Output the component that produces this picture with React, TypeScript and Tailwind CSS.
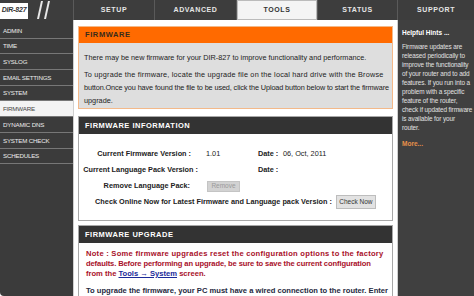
import React from "react";

const sideItems = [
  "ADMIN",
  "TIME",
  "SYSLOG",
  "EMAIL SETTINGS",
  "SYSTEM",
  "FIRMWARE",
  "DYNAMIC DNS",
  "SYSTEM CHECK",
  "SCHEDULES",
];

const tabs = [
  { label: "SETUP", w: "w-[80px]" },
  { label: "ADVANCED", w: "w-[81px]" },
  { label: "TOOLS", w: "w-[80px]", active: true },
  { label: "STATUS", w: "w-[79px]" },
  { label: "SUPPORT", w: "w-[76px]" },
];

const hints = [
  "Firmware updates are",
  "released periodically to",
  "improve the functionality",
  "of your router and to add",
  "features. If you run into a",
  "problem with a specific",
  "feature of the router,",
  "check if updated firmware",
  "is available for your",
  "router.",
];

export default function App() {
  return (
    <div className="w-[474px] h-[296px] overflow-hidden bg-white font-['Liberation_Sans',Arial,sans-serif] flex flex-col">
      {/* Top bar */}
      <div className="h-[20px] bg-[#3d3d3d] flex items-stretch shrink-0">
        <div className="w-[73px] flex items-center">
          <div className="mt-[1px] w-[28px] h-[16px] bg-white flex items-center justify-center">
            <span className="text-[7px] font-bold italic text-[#333] tracking-[-0.2px]">DIR-827</span>
          </div>
          <svg width="14" height="18" viewBox="0 0 14 18" className="ml-[9px]">
            <polygon points="4,0 6,0 2,18 0,18" fill="#e8e8e8" />
            <polygon points="11,0 13,0 9,18 7,18" fill="#e8e8e8" />
          </svg>
        </div>
        <div className="flex gap-[1px] bg-[#5a5a5a] pl-[1px]">
          {tabs.map((t) => (
            <div
              key={t.label}
              className={`${t.w} flex items-center justify-center ${
                t.active ? "bg-[#f4f4f4] border border-[#bbb]" : "bg-[#3d3d3d]"
              }`}
            >
              <span
                className={`text-[7px] font-bold tracking-[0.6px] ${
                  t.active ? "text-[#333]" : "text-[#e6e6e6]"
                }`}
              >
                {t.label}
              </span>
            </div>
          ))}
        </div>
      </div>

      <div className="flex flex-1 min-h-0">
        {/* Sidebar */}
        <div className="w-[73px] bg-[#3b3b3b] pt-[3px] shrink-0 rounded-bl-[4px]">
          {sideItems.map((s) => {
            const active = s === "FIRMWARE";
            return (
              <div
                key={s}
                className={`h-[15.7px] flex items-center pl-[3px] border-b border-[#777] ${
                  active ? "bg-[#f3f3f3]" : "bg-[#3b3b3b]"
                }`}
              >
                <span
                  className={`text-[6.2px] tracking-[-0.2px] ${
                    active ? "text-[#444]" : "text-[#ececec]"
                  }`}
                >
                  {s}
                </span>
              </div>
            );
          })}
        </div>

        {/* Main */}
        <div className="flex-1 bg-white px-[4px] pt-[6px] border-x border-[#d0d0d0] min-w-0">
          {/* FIRMWARE */}
          <div className="border border-[#f3b98a]">
            <div className="h-[16px] bg-[#ff6a00] flex items-center pl-[6px]">
              <span className="text-[7.5px] font-bold tracking-[0.6px] text-[#3a2a1a]">FIRMWARE</span>
            </div>
            <div className="h-[65px] bg-[#dedede] px-[5px] pt-[8px] text-[7.3px] leading-[13px] text-[#222] whitespace-nowrap">
              <p>There may be new firmware for your DIR-827 to improve functionality and performance.</p>
              <p className="mt-[4px]">
                <span className="tracking-[0.2px]">To upgrade the firmware, locate the upgrade file on the local hard drive with the Browse</span>
                <br />
                <span className="tracking-[-0.12px]">button.Once you have found the file to be used, click the Upload button below to start the firmware</span>
                <br />
                upgrade.
              </p>
            </div>
          </div>

          {/* FIRMWARE INFORMATION */}
          <div className="mt-[7px] border border-[#a8a8a8]">
            <div className="h-[17px] bg-[#333] flex items-center pl-[6px]">
              <span className="text-[7.5px] font-bold tracking-[0.5px] text-white">FIRMWARE INFORMATION</span>
            </div>
            <div className="h-[86px] bg-white pt-[12px] text-[7.3px] text-[#222] whitespace-nowrap">
              <div className="h-[16px] flex items-center">
                <div className="w-[121px] text-right pr-[9px] font-bold">Current Firmware Version :</div>
                <div className="ml-[6px] w-[52px]">1.01</div>
                <div className="w-[25px] font-bold">Date :</div>
                <div>06, Oct, 2011</div>
              </div>
              <div className="h-[16px] flex items-center">
                <div className="w-[121px] text-right pr-[2px] font-bold">Current Language Pack Version :</div>
                <div className="ml-[6px] w-[52px]"></div>
                <div className="w-[25px] font-bold">Date :</div>
              </div>
              <div className="h-[16px] flex items-center">
                <div className="w-[121px] text-right pr-[10px] font-bold">Remove Language Pack:</div>
                <div className="ml-[7px] w-[33px] h-[11px] bg-[#d2d2d2] border border-[#c4c4c4] flex items-center justify-center text-[6.5px] text-[#9a9a9a]">
                  Remove
                </div>
              </div>
              <div className="h-[16px] flex items-center justify-center gap-[4px]">
                <span className="font-bold">Check Online Now for Latest Firmware and Language pack Version :</span>
                <span className="w-[40px] h-[14px] bg-[#e2e2e2] border border-[#bdbdbd] flex items-center justify-center text-[6.5px] text-[#333]">
                  Check Now
                </span>
              </div>
            </div>
          </div>

          {/* FIRMWARE UPGRADE */}
          <div className="mt-[4px] border border-[#a8a8a8]">
            <div className="h-[17px] bg-[#333] flex items-center pl-[6px]">
              <span className="text-[7.5px] font-bold tracking-[0.5px] text-white">FIRMWARE UPGRADE</span>
            </div>
            <div className="bg-white px-[7px] pt-[6px] text-[7.6px] font-bold whitespace-nowrap">
              <p className="leading-[10px] text-[#a8102a]">
                <span className="tracking-[0.25px]">Note : Some firmware upgrades reset the configuration options to the factory</span>
                <br />
                <span className="tracking-[-0.12px]">defaults. Before performing an upgrade, be sure to save the current configuration</span>
                <br />
                from the <span className="text-[#1a2a9a] underline">Tools → System</span> screen.
              </p>
              <p className="mt-[7px] leading-[10px] text-[#1f2940]">
                To upgrade the firmware, your PC must have a wired connection to the router. Enter
              </p>
            </div>
          </div>
        </div>

        {/* Right panel */}
        <div className="w-[76px] bg-[#404040] shrink-0 pl-[4px] pt-[8px] text-[#e2e2e2] overflow-hidden">
          <div className="text-[6.5px] font-bold text-white leading-[10px]">Helpful Hints ...</div>
          <div className="mt-[4px] text-[6.4px] leading-[9px] tracking-[-0.1px] whitespace-nowrap">
            {hints.map((h) => (
              <div key={h}>{h}</div>
            ))}
          </div>
          <div className="mt-[7px] text-[6.5px] font-bold text-[#e8914a] leading-[9px]">More...</div>
        </div>
      </div>
    </div>
  );
}
